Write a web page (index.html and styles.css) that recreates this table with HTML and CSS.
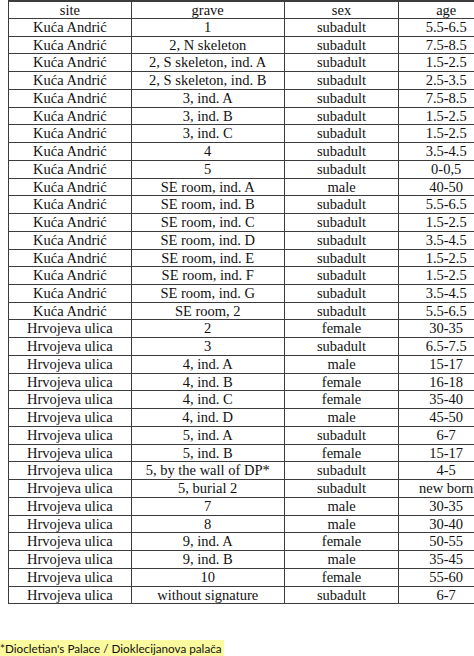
FILE: index.html
```html
<!DOCTYPE html>
<html>
<head>
<meta charset="utf-8">
<link rel="stylesheet" href="styles.css">
</head>
<body>
<div class="sheet">
<table class="data">
  <colgroup>
    <col class="c-site"><col class="c-grave"><col class="c-sex"><col class="c-age">
  </colgroup>
  <thead>
    <tr><th>site</th><th>grave</th><th>sex</th><th>age</th></tr>
  </thead>
  <tbody>
    <tr><td>Kuća Andrić</td><td>1</td><td>subadult</td><td>5.5-6.5</td></tr>
    <tr><td>Kuća Andrić</td><td>2, N skeleton</td><td>subadult</td><td>7.5-8.5</td></tr>
    <tr><td>Kuća Andrić</td><td>2, S skeleton, ind. A</td><td>subadult</td><td>1.5-2.5</td></tr>
    <tr><td>Kuća Andrić</td><td>2, S skeleton, ind. B</td><td>subadult</td><td>2.5-3.5</td></tr>
    <tr><td>Kuća Andrić</td><td>3, ind. A</td><td>subadult</td><td>7.5-8.5</td></tr>
    <tr><td>Kuća Andrić</td><td>3, ind. B</td><td>subadult</td><td>1.5-2.5</td></tr>
    <tr><td>Kuća Andrić</td><td>3, ind. C</td><td>subadult</td><td>1.5-2.5</td></tr>
    <tr><td>Kuća Andrić</td><td>4</td><td>subadult</td><td>3.5-4.5</td></tr>
    <tr><td>Kuća Andrić</td><td>5</td><td>subadult</td><td>0-0,5</td></tr>
    <tr><td>Kuća Andrić</td><td>SE room, ind. A</td><td>male</td><td>40-50</td></tr>
    <tr><td>Kuća Andrić</td><td>SE room, ind. B</td><td>subadult</td><td>5.5-6.5</td></tr>
    <tr><td>Kuća Andrić</td><td>SE room, ind. C</td><td>subadult</td><td>1.5-2.5</td></tr>
    <tr><td>Kuća Andrić</td><td>SE room, ind. D</td><td>subadult</td><td>3.5-4.5</td></tr>
    <tr><td>Kuća Andrić</td><td>SE room, ind. E</td><td>subadult</td><td>1.5-2.5</td></tr>
    <tr><td>Kuća Andrić</td><td>SE room, ind. F</td><td>subadult</td><td>1.5-2.5</td></tr>
    <tr><td>Kuća Andrić</td><td>SE room, ind. G</td><td>subadult</td><td>3.5-4.5</td></tr>
    <tr><td>Kuća Andrić</td><td>SE room, 2</td><td>subadult</td><td>5.5-6.5</td></tr>
    <tr><td>Hrvojeva ulica</td><td>2</td><td>female</td><td>30-35</td></tr>
    <tr><td>Hrvojeva ulica</td><td>3</td><td>subadult</td><td>6.5-7.5</td></tr>
    <tr><td>Hrvojeva ulica</td><td>4, ind. A</td><td>male</td><td>15-17</td></tr>
    <tr><td>Hrvojeva ulica</td><td>4, ind. B</td><td>female</td><td>16-18</td></tr>
    <tr><td>Hrvojeva ulica</td><td>4, ind. C</td><td>female</td><td>35-40</td></tr>
    <tr><td>Hrvojeva ulica</td><td>4, ind. D</td><td>male</td><td>45-50</td></tr>
    <tr><td>Hrvojeva ulica</td><td>5, ind. A</td><td>subadult</td><td>6-7</td></tr>
    <tr><td>Hrvojeva ulica</td><td>5, ind. B</td><td>female</td><td>15-17</td></tr>
    <tr><td>Hrvojeva ulica</td><td>5, by the wall of DP*</td><td>subadult</td><td>4-5</td></tr>
    <tr><td>Hrvojeva ulica</td><td>5, burial 2</td><td>subadult</td><td>new born</td></tr>
    <tr><td>Hrvojeva ulica</td><td>7</td><td>male</td><td>30-35</td></tr>
    <tr><td>Hrvojeva ulica</td><td>8</td><td>male</td><td>30-40</td></tr>
    <tr><td>Hrvojeva ulica</td><td>9, ind. A</td><td>female</td><td>50-55</td></tr>
    <tr><td>Hrvojeva ulica</td><td>9, ind. B</td><td>male</td><td>35-45</td></tr>
    <tr><td>Hrvojeva ulica</td><td>10</td><td>female</td><td>55-60</td></tr>
    <tr><td>Hrvojeva ulica</td><td>without signature</td><td>subadult</td><td>6-7</td></tr>
  </tbody>
</table>
<p class="footnote"><span class="mark">*Diocletian's Palace / Dioklecijanova palača</span></p>
</div>
</body>
</html>
```
FILE: styles.css
```css
html {
  overflow: hidden;
  background: #ffffff;
}
body {
  margin: 0;
  overflow: hidden;
}
.sheet {
  width: 540px;
}
.data {
  margin-left: 8px;
  border-collapse: separate;
  border-spacing: 0;
  table-layout: fixed;
  width: 486px;
  min-width: 486px;
  border-top: 2px solid #3c3c3c;
  border-left: 1px solid #3c3c3c;
  font-family: "Liberation Serif", "Times New Roman", serif;
  font-size: 14.5px;
  color: #111111;
}
.c-site { width: 122px; }
.c-grave { width: 152px; }
.c-sex { width: 114px; }
.c-age { width: 94px; }
.data th,
.data td {
  font-weight: normal;
  text-align: center;
  white-space: nowrap;
  padding: 0;
  padding-top: 1px;
  height: 15.74px;
  line-height: 15.74px;
  border-right: 1px solid #3c3c3c;
  border-bottom: 1px solid #3c3c3c;
}
.data th {
  height: 15px;
  line-height: 15px;
}
.footnote {
  margin: 36px 0 0 0;
  font-family: Lato, "Open Sans", sans-serif;
  font-size: 11.7px;
  line-height: 16px;
  color: #111111;
}
.mark {
  display: inline-block;
  background: #fbfa9e;
  padding: 0 2px 0 0;
}
```
